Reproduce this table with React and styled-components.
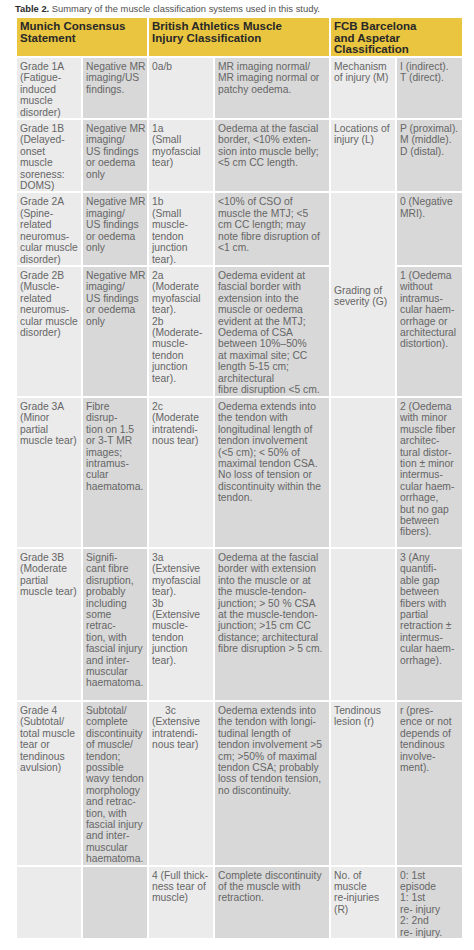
import React from 'react';
import styled, { createGlobalStyle } from 'styled-components';

const GlobalStyle = createGlobalStyle`
  html, body { margin: 0; padding: 0; background: #ffffff; }
  body { font-family: "Liberation Sans", Arial, sans-serif; }
`;

const Page = styled.div`
  width: 474px;
  height: 950px;
  box-sizing: border-box;
  padding-left: 15px;
  overflow: hidden;
  background: #ffffff;
`;

const Caption = styled.div`
  box-sizing: border-box;
  height: 16px;
  padding-top: 3px;
  font-size: 9.4px;
  line-height: 11px;
  color: #505050;
  white-space: nowrap;
`;

const CaptionLabel = styled.b`
  font-weight: 700;
  color: #2a2a2a;
`;

const Table = styled.table`
  border-collapse: collapse;
  table-layout: fixed;
  width: 447px;
`;

const Col = styled.col`
  width: ${(p) => p.$w}px;
`;

const HeadRow = styled.tr`
  height: 40px;
`;

const HeadCell = styled.th`
  background: #e9c540;
  border: 2px solid #ffffff;
  padding: 3px 3px 0 3px;
  vertical-align: top;
  text-align: left;
  font-size: 11.5px;
  line-height: 11.6px;
  font-weight: 700;
  color: #282828;
  white-space: nowrap;
`;

const Row = styled.tr`
  height: ${(p) => p.$h}px;
`;

const Cell = styled.td`
  background: ${(p) => (p.$dark ? '#d8d8d8' : '#ebebeb')};
  border: 2px solid #ffffff;
  padding: 3px 2px 0 3px;
  vertical-align: ${(p) => (p.$middle ? 'middle' : 'top')};
  font-size: 10.3px;
  line-height: 11.4px;
  color: #666666;
  white-space: nowrap;
  overflow: visible;
`;

const Line = styled.span`
  display: block;
  padding-left: ${(p) => (p.$indent ? 13 : 0)}px;
`;

const columns = [66, 66, 66, 116, 66, 67];

const headers = [
  ['Munich Consensus', 'Statement'],
  ['British Athletics Muscle', 'Injury Classification'],
  ['FCB Barcelona', 'and Aspetar', 'Classification'],
];

const rows = [
  {
    h: 62,
    cells: [
      ['Grade 1A', '(Fatigue-', 'induced', 'muscle', 'disorder)'],
      ['Negative MR', 'imaging/US', 'findings.'],
      ['0a/b'],
      ['MR imaging normal/', 'MR imaging normal or', 'patchy oedema.'],
      ['Mechanism', 'of injury (M)'],
      ['I (indirect).', 'T (direct).'],
    ],
  },
  {
    h: 72,
    cells: [
      ['Grade 1B', '(Delayed-', 'onset', 'muscle', 'soreness:', 'DOMS)'],
      ['Negative MR', 'imaging/', 'US findings', 'or oedema', 'only'],
      ['1a', '(Small', 'myofascial', 'tear)'],
      ['Oedema at the fascial', 'border, <10% exten-', 'sion into muscle belly;', '<5 cm CC length.'],
      ['Locations of', 'injury (L)'],
      ['P (proximal).', 'M (middle).', 'D (distal).'],
    ],
  },
  {
    h: 72,
    cells: [
      ['Grade 2A', '(Spine-', 'related', 'neuromus-', 'cular muscle', 'disorder)'],
      ['Negative MR', 'imaging/', 'US findings', 'or oedema', 'only'],
      ['1b', '(Small', 'muscle-', 'tendon', 'junction', 'tear).'],
      ['<10% of CSO of', 'muscle the MTJ; <5', 'cm CC length; may', 'note fibre disruption of', '<1 cm.'],
      { lines: ['Grading of', 'severity (G)'], rowSpan: 2, middle: true },
      ['0 (Negative', 'MRI).'],
    ],
  },
  {
    h: 131,
    cells: [
      ['Grade 2B', '(Muscle-', 'related', 'neuromus-', 'cular muscle', 'disorder)'],
      ['Negative MR', 'imaging/', 'US findings', 'or oedema', 'only'],
      ['2a', '(Moderate', 'myofascial', 'tear).', '2b', '(Moderate-', 'muscle-', 'tendon', 'junction', 'tear).'],
      [
        'Oedema evident at',
        'fascial border with',
        'extension into the',
        'muscle or oedema',
        'evident at the MTJ;',
        'Oedema of CSA',
        'between 10%–50%',
        'at maximal site; CC',
        'length 5-15 cm;',
        'architectural',
        'fibre disruption <5 cm.',
      ],
      null,
      ['1 (Oedema', 'without', 'intramus-', 'cular haem-', 'orrhage or', 'architectural', 'distortion).'],
    ],
  },
  {
    h: 151,
    cells: [
      ['Grade 3A', '(Minor', 'partial', 'muscle tear)'],
      ['Fibre', 'disrup-', 'tion on 1.5', 'or 3-T MR', 'images;', 'intramus-', 'cular', 'haematoma.'],
      ['2c', '(Moderate', 'intratendi-', 'nous tear)'],
      [
        'Oedema extends into',
        'the tendon with',
        'longitudinal length of',
        'tendon involvement',
        '(<5 cm); < 50% of',
        'maximal tendon CSA.',
        'No loss of tension or',
        'discontinuity within the',
        'tendon.',
      ],
      [],
      [
        '2 (Oedema',
        'with minor',
        'muscle fiber',
        'architec-',
        'tural distor-',
        'tion ± minor',
        'intermus-',
        'cular haem-',
        'orrhage,',
        'but no gap',
        'between',
        'fibers).',
      ],
    ],
  },
  {
    h: 153,
    cells: [
      ['Grade 3B', '(Moderate', 'partial', 'muscle tear)'],
      [
        'Signifi-',
        'cant fibre',
        'disruption,',
        'probably',
        'including',
        'some',
        'retrac-',
        'tion, with',
        'fascial injury',
        'and inter-',
        'muscular',
        'haematoma.',
      ],
      ['3a', '(Extensive', 'myofascial', 'tear).', '3b', '(Extensive', 'muscle-', 'tendon', 'junction', 'tear).'],
      [
        'Oedema at the fascial',
        'border with extension',
        'into the muscle or at',
        'the muscle-tendon-',
        'junction; > 50 % CSA',
        'at the muscle-tendon-',
        'junction; >15 cm CC',
        'distance; architectural',
        'fibre disruption > 5 cm.',
      ],
      [],
      [
        '3 (Any',
        'quantifi-',
        'able gap',
        'between',
        'fibers with',
        'partial',
        'retraction ±',
        'intermus-',
        'cular haem-',
        'orrhage).',
      ],
    ],
  },
  {
    h: 164,
    cells: [
      ['Grade 4', '(Subtotal/', 'total muscle', 'tear or', 'tendinous', 'avulsion)'],
      [
        'Subtotal/',
        'complete',
        'discontinuity',
        'of muscle/',
        'tendon;',
        'possible',
        'wavy tendon',
        'morphology',
        'and retrac-',
        'tion, with',
        'fascial injury',
        'and inter-',
        'muscular',
        'haematoma.',
      ],
      { lines: ['3c', '(Extensive', 'intratendi-', 'nous tear)'], indentFirst: true },
      [
        'Oedema extends into',
        'the tendon with longi-',
        'tudinal length of',
        'tendon involvement >5',
        'cm; >50% of maximal',
        'tendon CSA; probably',
        'loss of tendon tension,',
        'no discontinuity.',
      ],
      ['Tendinous', 'lesion (r)'],
      ['r (pres-', 'ence or not', 'depends of', 'tendinous', 'involve-', 'ment).'],
    ],
  },
  {
    h: 72,
    cells: [
      [],
      [],
      ['4 (Full thick-', 'ness tear of', 'muscle)'],
      ['Complete discontinuity', 'of the muscle with', 'retraction.'],
      ['No. of', 'muscle', 're-injuries', '(R)'],
      ['0: 1st', 'episode', '1: 1st', 're- injury', '2: 2nd', 're- injury.'],
    ],
  },
];

function renderCell(cell, colIndex, key) {
  if (cell === null) return null;
  const spec = Array.isArray(cell) ? { lines: cell } : cell;
  return (
    <Cell key={key} $dark={colIndex % 2 === 1} $middle={spec.middle} rowSpan={spec.rowSpan}>
      {spec.lines.map((line, i) => (
        <Line key={i} $indent={spec.indentFirst && i === 0}>
          {line}
        </Line>
      ))}
    </Cell>
  );
}

export default function App() {
  return (
    <Page>
      <GlobalStyle />
      <Caption>
        <CaptionLabel>Table 2.</CaptionLabel> Summary of the muscle classification systems used in this study.
      </Caption>
      <Table>
        <colgroup>
          {columns.map((w, i) => (
            <Col key={i} $w={w} />
          ))}
        </colgroup>
        <thead>
          <HeadRow>
            {headers.map((lines, i) => (
              <HeadCell key={i} colSpan={2}>
                {lines.map((l, j) => (
                  <Line key={j}>{l}</Line>
                ))}
              </HeadCell>
            ))}
          </HeadRow>
        </thead>
        <tbody>
          {rows.map((row, r) => (
            <Row key={r} $h={row.h}>
              {row.cells.map((cell, c) => renderCell(cell, c, c))}
            </Row>
          ))}
        </tbody>
      </Table>
    </Page>
  );
}
